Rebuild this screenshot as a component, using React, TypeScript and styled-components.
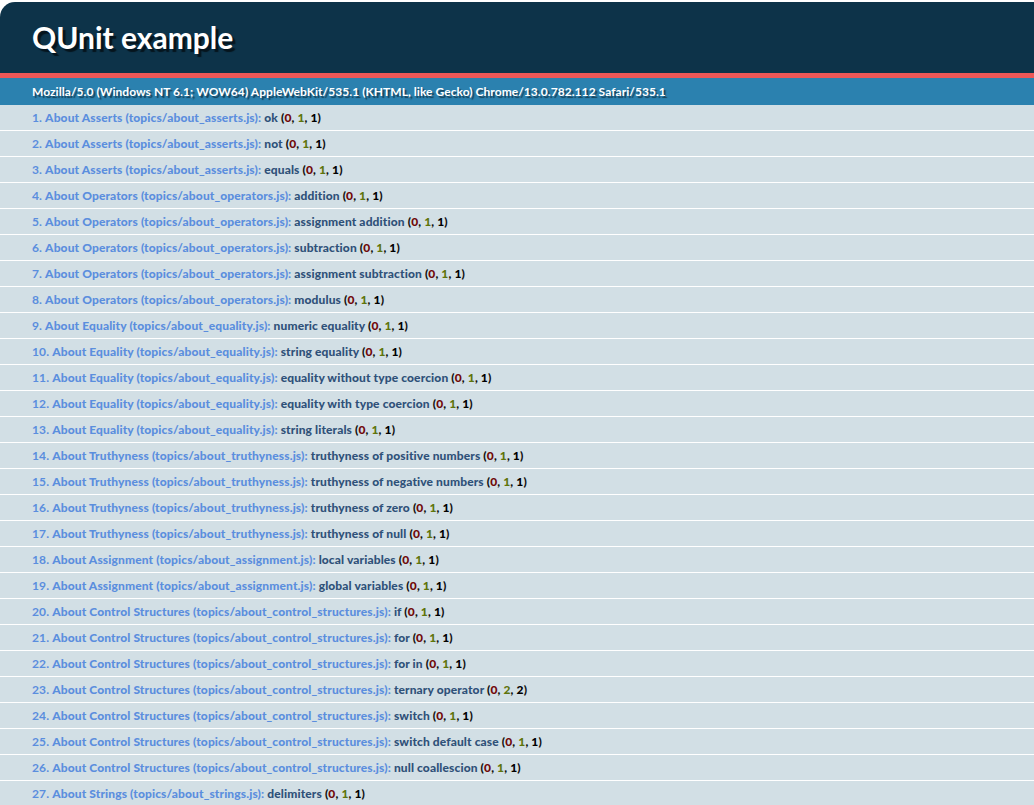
import styled, { createGlobalStyle } from 'styled-components';

type TestRow = {
  module: string;
  file: string;
  name: string;
  failed: number;
  passed: number;
  total: number;
};

const mod = (module: string, file: string) => (name: string, passed = 1): TestRow => ({
  module,
  file,
  name,
  failed: 0,
  passed,
  total: passed,
});

const asserts = mod('About Asserts', 'about_asserts.js');
const operators = mod('About Operators', 'about_operators.js');
const equality = mod('About Equality', 'about_equality.js');
const truthy = mod('About Truthyness', 'about_truthyness.js');
const assignment = mod('About Assignment', 'about_assignment.js');
const control = mod('About Control Structures', 'about_control_structures.js');
const strings = mod('About Strings', 'about_strings.js');

const tests: TestRow[] = [
  asserts('ok'),
  asserts('not'),
  asserts('equals'),
  operators('addition'),
  operators('assignment addition'),
  operators('subtraction'),
  operators('assignment subtraction'),
  operators('modulus'),
  equality('numeric equality'),
  equality('string equality'),
  equality('equality without type coercion'),
  equality('equality with type coercion'),
  equality('string literals'),
  truthy('truthyness of positive numbers'),
  truthy('truthyness of negative numbers'),
  truthy('truthyness of zero'),
  truthy('truthyness of null'),
  assignment('local variables'),
  assignment('global variables'),
  control('if'),
  control('for'),
  control('for in'),
  control('ternary operator', 2),
  control('switch'),
  control('switch default case'),
  control('null coallescion'),
  strings('delimiters'),
];

const userAgent =
  'Mozilla/5.0 (Windows NT 6.1; WOW64) AppleWebKit/535.1 (KHTML, like Gecko) Chrome/13.0.782.112 Safari/535.1';

const GlobalStyle = createGlobalStyle`
  html, body {
    margin: 0;
    padding: 0;
    background: #ffffff;
  }
  body {
    padding-top: 2px;
    font-family: Lato, "Open Sans", sans-serif;
    overflow: hidden;
  }
`;

const App = () => (
  <>
    <GlobalStyle />
    <Header>QUnit example</Header>
    <Banner />
    <UserAgent>{userAgent}</UserAgent>
    <Tests>
      {tests.map((t, i) => (
        <TestItem key={i}>
          <strong>
            <ModuleName>
              {t.module} (topics/{t.file})
            </ModuleName>
            : <TestName>{t.name}</TestName>{' '}
            <Counts>
              (<Count $kind="failed">{t.failed}</Count>, <Count $kind="passed">{t.passed}</Count>,{' '}
              <Count $kind="total">{t.total}</Count>)
            </Counts>
          </strong>
        </TestItem>
      ))}
    </Tests>
  </>
);

export default App;

const Header = styled.h1`
  margin: 0;
  height: 71px;
  box-sizing: border-box;
  padding: 19px 0 19px 32px;
  line-height: 33px;
  font-size: 30px;
  font-weight: 700;
  color: #ffffff;
  background-color: #0d3349;
  border-radius: 15px 0 0 0;
  text-shadow: rgba(0, 0, 0, 0.6) 3px 3px 1px;
`;

const Banner = styled.div`
  height: 5px;
  background-color: #ee5757;
`;

const UserAgent = styled.h2`
  margin: 0;
  padding: 6px 0 6px 32px;
  line-height: 15px;
  font-size: 12px;
  letter-spacing: 0.05px;
  font-weight: 700;
  color: #ffffff;
  background-color: #2b81af;
  text-shadow: rgba(0, 0, 0, 0.5) 2px 2px 1px;
  white-space: nowrap;
`;

const Tests = styled.ol`
  margin: 0;
  padding: 0;
  list-style-position: inside;
  font-size: 12px;
  letter-spacing: 0.12px;
`;

const TestItem = styled.li`
  padding: 5px 0 5px 32px;
  line-height: 15px;
  background-color: #d2dfe5;
  border-bottom: 1px solid #ffffff;
  color: #5b8ede;
  font-weight: 700;
  white-space: nowrap;

  &::marker {
    color: #5b8ede;
  }
`;

const ModuleName = styled.span`
  color: #5b8ede;
`;

const TestName = styled.span`
  color: #2f5179;
`;

const Counts = styled.span`
  color: #111111;
`;

const countColors = {
  failed: '#710909',
  passed: '#5e740b',
  total: '#000000',
};

const Count = styled.b<{ $kind: keyof typeof countColors }>`
  color: ${(p) => countColors[p.$kind]};
`;
